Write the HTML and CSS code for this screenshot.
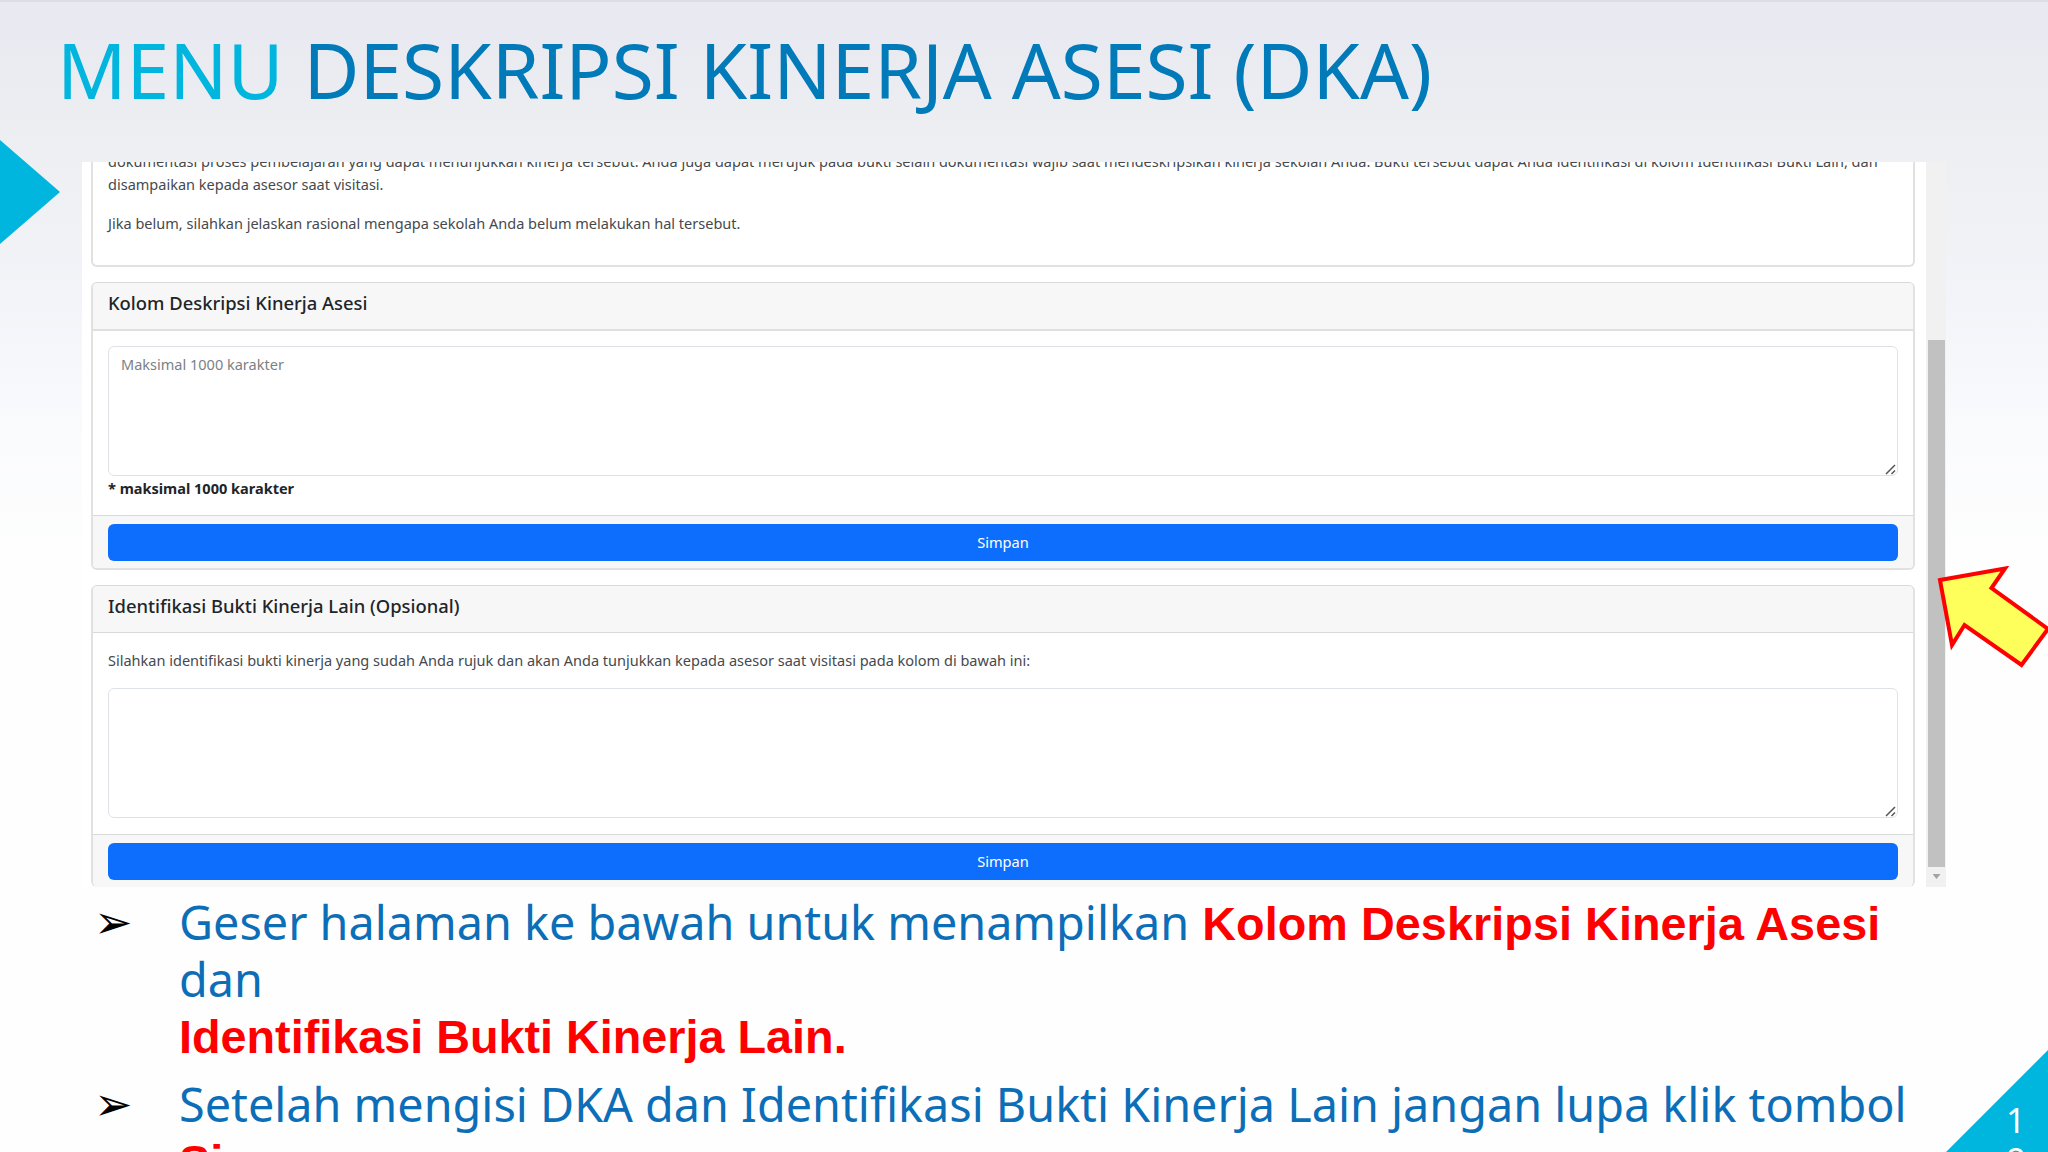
FILE: index.html
```html
<!DOCTYPE html>
<html lang="id">
<head>
    <meta charset="UTF-8">
    <meta name="viewport" content="width=device-width, initial-scale=1.0">
    <title>Menu Deskripsi Kinerja Asesi (DKA)</title>
    <link rel="stylesheet" href="styles.css">
</head>
<body>
    <div class="slide">
        <h1 class="title"><span class="title-accent">MENU</span> DESKRIPSI KINERJA ASESI (DKA)</h1>

        <div class="panel">
            <div class="panel-content">
                <div class="card card-intro">
                    <p>dokumentasi proses pembelajaran yang dapat menunjukkan kinerja tersebut. Anda juga dapat merujuk pada bukti selain dokumentasi wajib saat mendeskripsikan kinerja sekolah Anda. Bukti tersebut dapat Anda identifikasi di kolom Identifikasi Bukti Lain, dan<br>disampaikan kepada asesor saat visitasi.</p>
                    <p>Jika belum, silahkan jelaskan rasional mengapa sekolah Anda belum melakukan hal tersebut.</p>
                </div>

                <div class="card">
                    <div class="card-header">Kolom Deskripsi Kinerja Asesi</div>
                    <div class="card-body">
                        <div class="field">
                            Maksimal 1000 karakter
                            <svg class="grip" viewBox="0 0 12 12"><path d="M2 11 L11 2 M7.5 11 L11 7.5"/></svg>
                        </div>
                        <div class="hint">* maksimal 1000 karakter</div>
                    </div>
                    <div class="card-footer"><button class="btn" type="button">Simpan</button></div>
                </div>

                <div class="card card-last">
                    <div class="card-header">Identifikasi Bukti Kinerja Lain (Opsional)</div>
                    <div class="card-body">
                        <p class="info">Silahkan identifikasi bukti kinerja yang sudah Anda rujuk dan akan Anda tunjukkan kepada asesor saat visitasi pada kolom di bawah ini:</p>
                        <div class="field">
                            <svg class="grip" viewBox="0 0 12 12"><path d="M2 11 L11 2 M7.5 11 L11 7.5"/></svg>
                        </div>
                    </div>
                    <div class="card-footer"><button class="btn" type="button">Simpan</button></div>
                </div>
            </div>
            <div class="scrollbar">
                <div class="thumb"></div>
                <div class="scroll-down"></div>
            </div>
        </div>

        <ul class="steps">
            <li>Geser halaman ke bawah untuk menampilkan <b class="wide">Kolom Deskripsi Kinerja Asesi</b><br>dan<br><b>Identifikasi Bukti Kinerja Lain.</b></li>
            <li>Setelah mengisi DKA dan Identifikasi Bukti Kinerja Lain jangan lupa klik tombol<br><b>Simpan</b></li>
        </ul>

        <div class="marker"></div>
        <svg class="arrow" viewBox="0 0 112 102"><path d="M4 14 L69 2.500 L55.500 22 L112 63 L85.500 99 L28.500 59 L16 79 Z"/></svg>
        <div class="corner"><span class="page-number">18</span></div>
    </div>
</body>
</html>
```
FILE: styles.css
```css
* {
    margin: 0;
    padding: 0;
    box-sizing: border-box;
}
body {
    font-family: "Noto Sans", sans-serif;
    background: #fff;
    overflow: hidden;
}
.slide {
    position: relative;
    width: 2048px;
    height: 1152px;
    overflow: hidden;
    background: linear-gradient(180deg, #e8e9f1 0, #edeff2 150px, #f3f4f9 300px, #fafbfd 430px, #fefefe 570px);
    border-top: 2px solid #dcdee3;
}
.title {
    height: 160px;
    padding: 13px 0 0 57px;
    font-size: 76.7px;
    line-height: 108px;
    font-weight: 400;
    color: #007ab9;
    white-space: nowrap;
}
.title-accent {
    color: #00b5de;
}

/* panel */
.panel {
    display: flex;
    width: 1864px;
    height: 725px;
    margin-left: 82px;
    background: #fff;
    overflow: hidden;
}
.panel-content {
    width: 1844px;
    padding: 0 11px 0 9px;
}
.card {
    margin-bottom: 15px;
    border: 2px solid #e1e1e1;
    border-top: 1px solid #d9d9d9;
    border-radius: 6px;
    overflow: hidden;
    font-size: 14.53px;
    line-height: 23px;
    color: #45494d;
}
.card-intro {
    height: 105px;
    padding: 0 15px;
    border-top: 0;
    border-radius: 0 0 6px 6px;
}
.card-intro p {
    margin-bottom: 16px;
    white-space: nowrap;
}
.card-intro p:first-child {
    margin-top: -12px;
}
.card-header {
    height: 48px;
    padding: 8px 15px;
    background: #f7f7f7;
    border-bottom: 2px solid #dfdfdf;
    font-size: 18.4px;
    font-weight: 500;
    color: #212529;
}
.card-body {
    padding: 15px 15px 0;
}
.card-last {
    margin-bottom: 0;
    border-bottom: 0;
}
.card-last .card-header {
    height: 47px;
    border-bottom-width: 1px;
    border-bottom-color: #d9d9d9;
}
.card-last .card-body {
    padding-bottom: 16px;
}
.field {
    position: relative;
    height: 130px;
    padding: 6px 12px;
    border: 1px solid #dee2e6;
    border-radius: 6px;
    color: #7c8186;
}
.grip {
    position: absolute;
    right: 1px;
    bottom: 0;
    width: 12px;
    height: 12px;
    fill: none;
    stroke: #555;
    stroke-width: 1.5;
}
.hint {
    height: 39px;
    padding-top: 1px;
    font-weight: 700;
    color: #212529;
}
.info {
    height: 40px;
    padding-top: 1px;
}
.card-footer {
    padding: 8px 15px 7px;
    background: #f7f7f7;
    border-top: 1px solid #d9d9d9;
}
.btn {
    display: block;
    width: 100%;
    height: 37px;
    padding-bottom: 2px;
    border: 0;
    border-radius: 6px;
    background: #0d6efd;
    color: #fff;
    font-family: inherit;
    font-size: 14.6px;
}

/* scrollbar */
.scrollbar {
    width: 20px;
    padding: 178px 1px 0 2px;
    background: #f1f1f1;
}
.thumb {
    height: 527px;
    background: #c1c1c1;
}
.scroll-down {
    width: 8px;
    height: 5px;
    margin: 7px auto 0;
    background: #a3a3a3;
    clip-path: polygon(0 0, 100% 0, 50% 100%);
}

/* instructions */
.steps {
    margin-left: 179px;
    padding-top: 7px;
    list-style: none;
    font-size: 46.75px;
    line-height: 56.5px;
    color: #0d6eb8;
    white-space: nowrap;
}
.steps li {
    margin-bottom: 12px;
}
.steps li::before {
    content: "➢";
    float: left;
    width: 85px;
    margin-left: -85px;
    font-family: "DejaVu Sans", sans-serif;
    font-size: 46px;
    color: #000;
}
.steps b {
    font-family: "Liberation Sans", sans-serif;
    line-height: 1;
    color: #f00;
}
.steps .wide {
    margin-left: 1px;
    letter-spacing: 0.06px;
}

/* decorations */
.marker {
    position: absolute;
    left: 0;
    top: 138px;
    width: 60px;
    height: 104px;
    background: #00b5de;
    clip-path: polygon(0 0, 100% 50%, 0 100%);
}
.arrow {
    position: absolute;
    left: 1936px;
    top: 564px;
    width: 112px;
    height: 102px;
    fill: #ffff5b;
    stroke: #f00;
    stroke-width: 4;
}
.corner {
    position: absolute;
    right: 0;
    bottom: 0;
    width: 102px;
    height: 102px;
    background: #00b5de;
    clip-path: polygon(100% 0, 100% 100%, 0 100%);
}
.page-number {
    display: block;
    width: 20px;
    margin: 50px 0 0 60px;
    font-size: 34px;
    line-height: 40px;
    color: #fff;
    word-break: break-all;
}
```
